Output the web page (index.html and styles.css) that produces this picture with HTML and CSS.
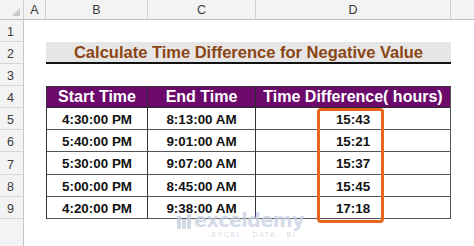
FILE: index.html
```html
<!DOCTYPE html>
<html>
<head>
<meta charset="utf-8">
<link rel="stylesheet" href="styles.css">
</head>
<body>
<div class="sheet">
  <div class="corner"><svg class="tri" width="8" height="8" viewBox="0 0 8 8"><polygon points="8,0 8,8 0,8" fill="#c9c9c9"/></svg></div>
  <div class="colhead ca">A</div>
  <div class="colhead cb">B</div>
  <div class="colhead cc">C</div>
  <div class="colhead cd">D</div>
  <div class="colhead ce"></div>

  <div class="rowhead r1">1</div>
  <div class="rowhead r2">2</div>
  <div class="rowhead r3">3</div>
  <div class="rowhead r4">4</div>
  <div class="rowhead r5">5</div>
  <div class="rowhead r6">6</div>
  <div class="rowhead r7">7</div>
  <div class="rowhead r8">8</div>
  <div class="rowhead r9">9</div>
  <div class="rowhead r10"></div>

  <div class="title">Calculate Time Difference for Negative Value</div>

  <div class="table">
    <div class="th">Start Time</div>
    <div class="th">End Time</div>
    <div class="th last">Time Difference( hours)</div>

    <div class="td">4:30:00 PM</div>
    <div class="td">8:13:00 AM</div>
    <div class="td last">15:43</div>

    <div class="td">5:40:00 PM</div>
    <div class="td">9:01:00 AM</div>
    <div class="td last">15:21</div>

    <div class="td">5:30:00 PM</div>
    <div class="td">9:07:00 AM</div>
    <div class="td last">15:37</div>

    <div class="td">5:00:00 PM</div>
    <div class="td">8:45:00 AM</div>
    <div class="td last">15:45</div>

    <div class="td">4:20:00 PM</div>
    <div class="td">9:38:00 AM</div>
    <div class="td last">17:18</div>

    <div class="highlight"></div>
  </div>

  <div class="watermark">
    <svg class="wm-icon" width="16" height="18" viewBox="0 0 16 18">
      <rect x="1" y="3" width="4" height="13" fill="#c3cde0"/>
      <rect x="6" y="6" width="4" height="10" fill="#c3cde0"/>
      <rect x="11" y="1" width="4" height="15" fill="#c3cde0"/>
    </svg>
    <div class="wm-text">
      <div class="wm-name">exceldemy</div>
      <div class="wm-sub">EXCEL · DATA · BI</div>
    </div>
  </div>
</div>
</body>
</html>
```

FILE: styles.css
```css
html, body {
  margin: 0;
  padding: 0;
  background: #ffffff;
}
body {
  width: 474px;
  height: 246px;
  overflow: hidden;
  font-family: "Liberation Sans", Arial, sans-serif;
}
.sheet {
  position: relative;
  display: grid;
  grid-template-columns: 24px 22px 102px 108px 195px 23px;
  grid-template-rows: 20px 22px 22px 22px 22px 22px 22px 23px 22px 22px 27px;
  width: 474px;
  height: 246px;
}
.corner {
  grid-row: 1;
  grid-column: 1;
  background: #f3f3f3;
  border-right: 1px solid #cfcfcf;
  border-bottom: 1px solid #bdbdbd;
  position: relative;
}
.tri {
  position: absolute;
  right: 3px;
  bottom: 3px;
}
.colhead {
  grid-row: 1;
  background: #f3f3f3;
  border-right: 1px solid #d0d0d0;
  border-bottom: 1px solid #bdbdbd;
  display: flex;
  align-items: center;
  justify-content: center;
  font-size: 12.5px;
  color: #3a3a3a;
  padding-top: 1px;
}
.ca { grid-column: 2; }
.cb { grid-column: 3; }
.cc { grid-column: 4; }
.cd { grid-column: 5; }
.ce { grid-column: 6; border-right: none; }

.rowhead {
  grid-column: 1;
  background: #f3f3f3;
  border-right: 1px solid #c6c6c6;
  border-bottom: 1px solid #d6d6d6;
  display: flex;
  align-items: center;
  justify-content: center;
  font-size: 12.5px;
  color: #3a3a3a;
  padding-top: 3px;
  padding-right: 2px;
}
.r1 { grid-row: 2; }
.r2 { grid-row: 3; }
.r3 { grid-row: 4; }
.r4 { grid-row: 5; }
.r5 { grid-row: 6; }
.r6 { grid-row: 7; }
.r7 { grid-row: 8; }
.r8 { grid-row: 9; }
.r9 { grid-row: 10; }
.r10 { grid-row: 11; border-bottom: none; }

.title {
  grid-row: 3;
  grid-column: 3 / 6;
  background: #e7e6e6;
  border-bottom: 2px solid #111111;
  display: flex;
  align-items: center;
  justify-content: center;
  font-weight: bold;
  font-size: 16.5px;
  color: #8b4513;
  padding-top: 1px;
}

.table {
  grid-row: 5 / 11;
  grid-column: 3 / 6;
  position: relative;
  display: grid;
  grid-template-columns: 101px 108px 195px;
  grid-template-rows: 21px 22px 22px 23px 22px 22px;
  border-left: 1px solid #333333;
  border-top: 1px solid #333333;
}
.th {
  background: #6c0a6c;
  color: #ffffff;
  font-weight: bold;
  font-size: 16px;
  display: flex;
  align-items: center;
  justify-content: center;
  border-right: 1px solid #2a2a2a;
  border-bottom: 1px solid #2a2a2a;
}
.td {
  color: #111111;
  font-weight: bold;
  font-size: 13.4px;
  display: flex;
  align-items: center;
  justify-content: center;
  border-right: 1px solid #333333;
  border-bottom: 1px solid #555555;
  padding-top: 1px;
}
.last {
  border-right: 1px solid #555555;
}
.highlight {
  position: absolute;
  left: 270px;
  top: 21px;
  width: 67px;
  height: 115px;
  box-sizing: border-box;
  border: 3px solid #e8661c;
  border-radius: 4px;
}

.watermark {
  position: absolute;
  left: 176px;
  top: 210px;
  display: flex;
  align-items: flex-start;
  gap: 2px;
  opacity: 0.75;
}
.wm-icon {
  margin-top: 3px;
}
.wm-text {
  display: flex;
  flex-direction: column;
  align-items: center;
}
.wm-name {
  font-family: "DejaVu Sans", sans-serif;
  font-weight: bold;
  font-size: 19px;
  line-height: 20px;
  color: #c5cfe2;
  letter-spacing: -0.5px;
}
.wm-sub {
  font-size: 7px;
  line-height: 9px;
  color: #c8cfdc;
  letter-spacing: 1.5px;
  margin-left: 10px;
}
```
